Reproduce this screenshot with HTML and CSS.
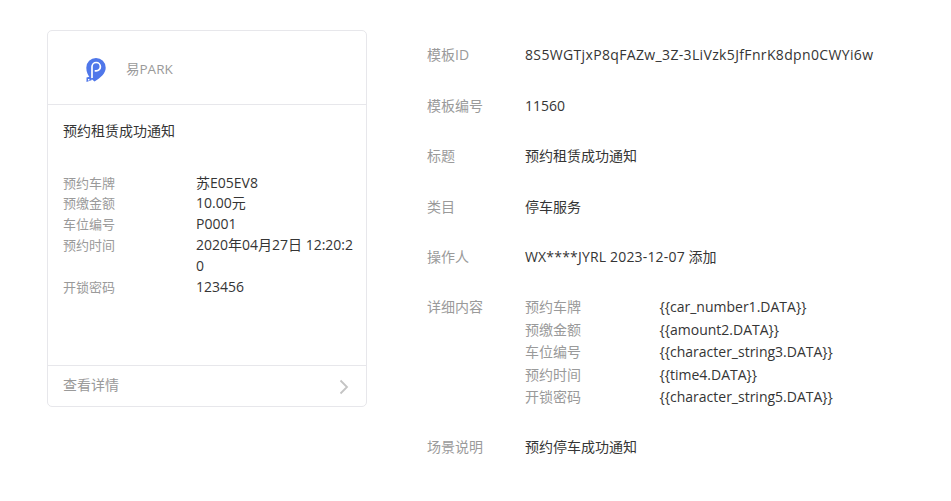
FILE: index.html
```html
<!DOCTYPE html>
<html lang="zh-CN">
<head>
<meta charset="utf-8">
<title>模板详情</title>
<link rel="stylesheet" href="styles.css">
</head>
<body>
<main class="page">
  <section class="card">
    <header class="card-head">
      <svg class="logo" width="20" height="24" viewBox="0 0 20 24" aria-hidden="true">
        <path fill="#4f77ea" d="M10 0a9.700 9.700 0 0 1 9.700 9.700c0 5.300-4.700 9.800-11.200 13.800L5 20.500C2 18 .3 14 .3 9.700A9.700 9.700 0 0 1 10 0z"/>
        <path fill="#4f77ea" d="M.5 19.500l4-1 1.500 3.500-5.500 2z"/>
        <path fill="none" stroke="#fff" stroke-width="1.700" d="M6 20V8.700a4.200 4.200 0 1 1 4.200 4.200H8.700"/>
        <path fill="#fff" d="M2 21h1.400v1.400H2z"/>
      </svg>
      <span class="brand">易PARK</span>
    </header>
    <div class="card-body">
      <h2 class="card-title">预约租赁成功通知</h2>
      <dl class="fields">
        <div class="field"><dt>预约车牌</dt><dd>苏E05EV8</dd></div>
        <div class="field"><dt>预缴金额</dt><dd>10.00元</dd></div>
        <div class="field"><dt>车位编号</dt><dd>P0001</dd></div>
        <div class="field"><dt>预约时间</dt><dd>2020年04月27日 12:20:20</dd></div>
        <div class="field"><dt>开锁密码</dt><dd>123456</dd></div>
      </dl>
    </div>
    <footer class="card-foot">
      <span class="foot-link">查看详情</span>
      <svg class="chevron" width="10" height="16" viewBox="0 0 10 16" aria-hidden="true"><path d="M1.500 1.500 8 8l-6.500 6.500" fill="none" stroke="#c4c4c4" stroke-width="1.800"/></svg>
    </footer>
  </section>
  <section class="info">
    <div class="row"><div class="label">模板ID</div><div class="value template-id">8S5WGTjxP8qFAZw_3Z-3LiVzk5JfFnrK8dpn0CWYi6w</div></div>
    <div class="row"><div class="label">模板编号</div><div class="value">11560</div></div>
    <div class="row"><div class="label">标题</div><div class="value">预约租赁成功通知</div></div>
    <div class="row"><div class="label">类目</div><div class="value">停车服务</div></div>
    <div class="row"><div class="label">操作人</div><div class="value"><span class="operator">WX****JYRL 2023-12-07</span> 添加</div></div>
    <div class="row"><div class="label">详细内容</div>
      <div class="value detail">
        <div class="detail-row"><span class="detail-key">预约车牌</span><span>{{car_number1.DATA}}</span></div>
        <div class="detail-row"><span class="detail-key">预缴金额</span><span>{{amount2.DATA}}</span></div>
        <div class="detail-row"><span class="detail-key">车位编号</span><span>{{character_string3.DATA}}</span></div>
        <div class="detail-row"><span class="detail-key">预约时间</span><span>{{time4.DATA}}</span></div>
        <div class="detail-row"><span class="detail-key">开锁密码</span><span>{{character_string5.DATA}}</span></div>
      </div>
    </div>
    <div class="row"><div class="label">场景说明</div><div class="value">预约停车成功通知</div></div>
  </section>
</main>
</body>
</html>
```
FILE: styles.css
```css
* { box-sizing: border-box; }
html, body { margin: 0; padding: 0; background: #fff; }
body {
  font-family: "Open Sans", "Noto Sans CJK SC", sans-serif;
  font-size: 14px;
  line-height: 22.400px;
  color: #353535;
}
.page {
  display: flex;
  align-items: flex-start;
  padding: 30px 0 0 47px;
}
.card {
  width: 320px;
  height: 377px;
  border: 1px solid #e7e7eb;
  border-radius: 5px;
  display: flex;
  flex-direction: column;
}
.card-head {
  height: 74px;
  flex: none;
  display: flex;
  align-items: center;
  padding: 4px 0 0 38px;
  border-bottom: 1px solid #e7e7eb;
}
.logo { flex: none; margin-right: 20px; }
.brand { color: #9a9a9a; font-size: 13.500px; }
.card-body {
  flex: 1;
  padding: 15px 0 0 15px;
}
.card-title {
  margin: 0 0 30.600px;
  font-size: 14px;
  font-weight: 400;
  line-height: 22px;
}
.fields { margin: 0; line-height: 20.800px; }
.field { display: flex; }
.field dt { width: 133px; flex: none; color: #9a9a9a; font-size: 13px; }
.field dd { margin: 0; width: 160px; word-break: break-all; }
.card-foot {
  height: 41px;
  flex: none;
  display: flex;
  align-items: center;
  justify-content: space-between;
  padding: 0 17px 0 15px;
  border-top: 1px solid #e7e7eb;
  color: #9a9a9a;
}
.foot-link { margin-bottom: 2px; }
.chevron { margin-top: 2px; }
.info {
  margin-left: 60px;
  padding-top: 14.300px;
  width: 500px;
}
.row {
  display: flex;
  margin-bottom: 28px;
}
.label { width: 98px; flex: none; color: #9a9a9a; }
.value { flex: 1; }
.template-id { letter-spacing: .35px; }
.operator { letter-spacing: .18px; }
.detail-row { display: flex; }
.detail-key { width: 134.500px; flex: none; color: #9a9a9a; }
```
